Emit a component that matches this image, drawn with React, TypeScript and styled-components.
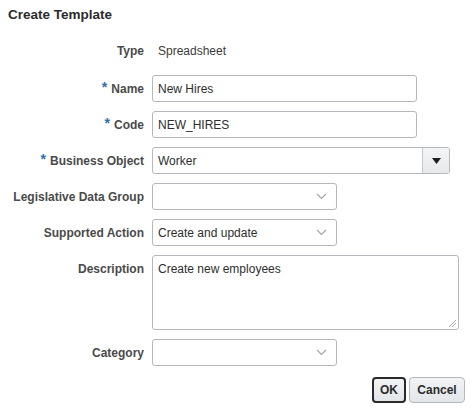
import React from "react";
import styled, { createGlobalStyle } from "styled-components";

const Global = createGlobalStyle`
  html, body { margin: 0; padding: 0; background: #ffffff; }
  body { font-family: "Liberation Sans", Arial, sans-serif; color: #333333; }
  * { box-sizing: border-box; }
`;

const Page = styled.div`
  width: 474px;
  height: 413px;
  padding: 0 9px 0 8px;
  background: #ffffff;
  overflow: hidden;
`;

const Title = styled.h1`
  margin: 0;
  height: 28px;
  display: flex;
  align-items: center;
  font-size: 13.5px;
  font-weight: 700;
  color: #2b2b2b;
`;

const Form = styled.div`
  margin-top: 8px;
  display: grid;
  grid-template-columns: 136px 1fr;
  column-gap: 8px;
  row-gap: 9px;
`;

const Label = styled.div<{ $tall?: boolean }>`
  height: ${(p) => (p.$tall ? 30 : 27)}px;
  align-self: start;
  display: flex;
  align-items: center;
  justify-content: flex-end;
  font-size: 12px;
  font-weight: 700;
  color: #4a4a4a;
  white-space: nowrap;
`;

const Req = styled.span`
  color: #2f6cb3;
  font-size: 14px;
  font-weight: 700;
  margin-right: 4px;
  position: relative;
  top: -2px;
`;

const Value = styled.div`
  height: 30px;
  display: flex;
  align-items: center;
  padding-left: 6px;
  font-size: 12px;
  color: #3a3a3a;
`;

const Box = styled.div<{ $w: number; $h?: number }>`
  position: relative;
  width: ${(p) => p.$w}px;
  height: ${(p) => p.$h ?? 27}px;
  border: 1px solid #b4b8bc;
  border-radius: 3px;
  background: #ffffff;
  display: flex;
  align-items: ${(p) => (p.$h ? "flex-start" : "center")};
  padding: ${(p) => (p.$h ? "6px 5px" : "0 5px")};
  font-size: 12px;
  color: #2e2e2e;
  overflow: hidden;
`;

const BoxText = styled.span`
  flex: 1;
  white-space: nowrap;
`;

const Chevron = styled.svg`
  flex: none;
  margin-right: 4px;
`;

const SelectWrap = styled.div`
  display: flex;
  width: 298px;
  height: 27px;
  border: 1px solid #b4b8bc;
  border-radius: 3px;
  background: #ffffff;
  overflow: hidden;
`;

const SelectText = styled.div`
  flex: 1;
  display: flex;
  align-items: center;
  padding: 0 5px;
  font-size: 12px;
  color: #2e2e2e;
`;

const SelectButton = styled.div`
  width: 27px;
  flex: none;
  border-left: 1px solid #c4c8cc;
  background: linear-gradient(#f4f5f6, #e6e8ea);
  display: flex;
  align-items: center;
  justify-content: center;
`;

const Grip = styled.svg`
  position: absolute;
  right: 1px;
  bottom: 1px;
`;

const Footer = styled.div`
  margin-top: 11px;
  display: flex;
  justify-content: flex-end;
  gap: 3px;
`;

const Button = styled.button<{ $focus?: boolean }>`
  height: 26px;
  padding: 0 ${(p) => (p.$focus ? 6 : 7)}px;
  min-width: ${(p) => (p.$focus ? 34 : 56)}px;
  border: ${(p) => (p.$focus ? "2px solid #2a2a2a" : "1px solid #b4b8bc")};
  border-radius: 4px;
  background: linear-gradient(#f1f3f5, #e3e6e9);
  font-family: "Liberation Sans", Arial, sans-serif;
  font-size: 12px;
  font-weight: 700;
  color: #2b2b2b;
  cursor: pointer;
`;

const ChevronIcon = () => (
  <Chevron width="11" height="7" viewBox="0 0 11 7">
    <polyline points="1,1 5.5,5.5 10,1" fill="none" stroke="#a0a4a8" strokeWidth="1.2" />
  </Chevron>
);

export default function App() {
  return (
    <Page>
      <Global />
      <Title>Create Template</Title>
      <Form>
        <Label $tall>Type</Label>
        <Value>Spreadsheet</Value>

        <Label>
          <Req>*</Req>Name
        </Label>
        <Box $w={265}>
          <BoxText>New Hires</BoxText>
        </Box>

        <Label>
          <Req>*</Req>Code
        </Label>
        <Box $w={265}>
          <BoxText>NEW_HIRES</BoxText>
        </Box>

        <Label>
          <Req>*</Req>Business Object
        </Label>
        <SelectWrap>
          <SelectText>Worker</SelectText>
          <SelectButton>
            <svg width="9" height="6" viewBox="0 0 9 6">
              <polygon points="0,0 9,0 4.5,6" fill="#1e1e1e" />
            </svg>
          </SelectButton>
        </SelectWrap>

        <Label>Legislative Data Group</Label>
        <Box $w={185}>
          <BoxText />
          <ChevronIcon />
        </Box>

        <Label>Supported Action</Label>
        <Box $w={185}>
          <BoxText>Create and update</BoxText>
          <ChevronIcon />
        </Box>

        <Label>Description</Label>
        <Box $w={307} $h={75}>
          <BoxText>Create new employees</BoxText>
          <Grip width="9" height="9" viewBox="0 0 9 9">
            <line x1="8" y1="1" x2="1" y2="8" stroke="#9a9ea2" strokeWidth="0.9" />
            <line x1="8" y1="4" x2="4" y2="8" stroke="#9a9ea2" strokeWidth="0.9" />
          </Grip>
        </Box>

        <Label>Category</Label>
        <Box $w={185}>
          <BoxText />
          <ChevronIcon />
        </Box>
      </Form>
      <Footer>
        <Button $focus>OK</Button>
        <Button>Cancel</Button>
      </Footer>
    </Page>
  );
}
